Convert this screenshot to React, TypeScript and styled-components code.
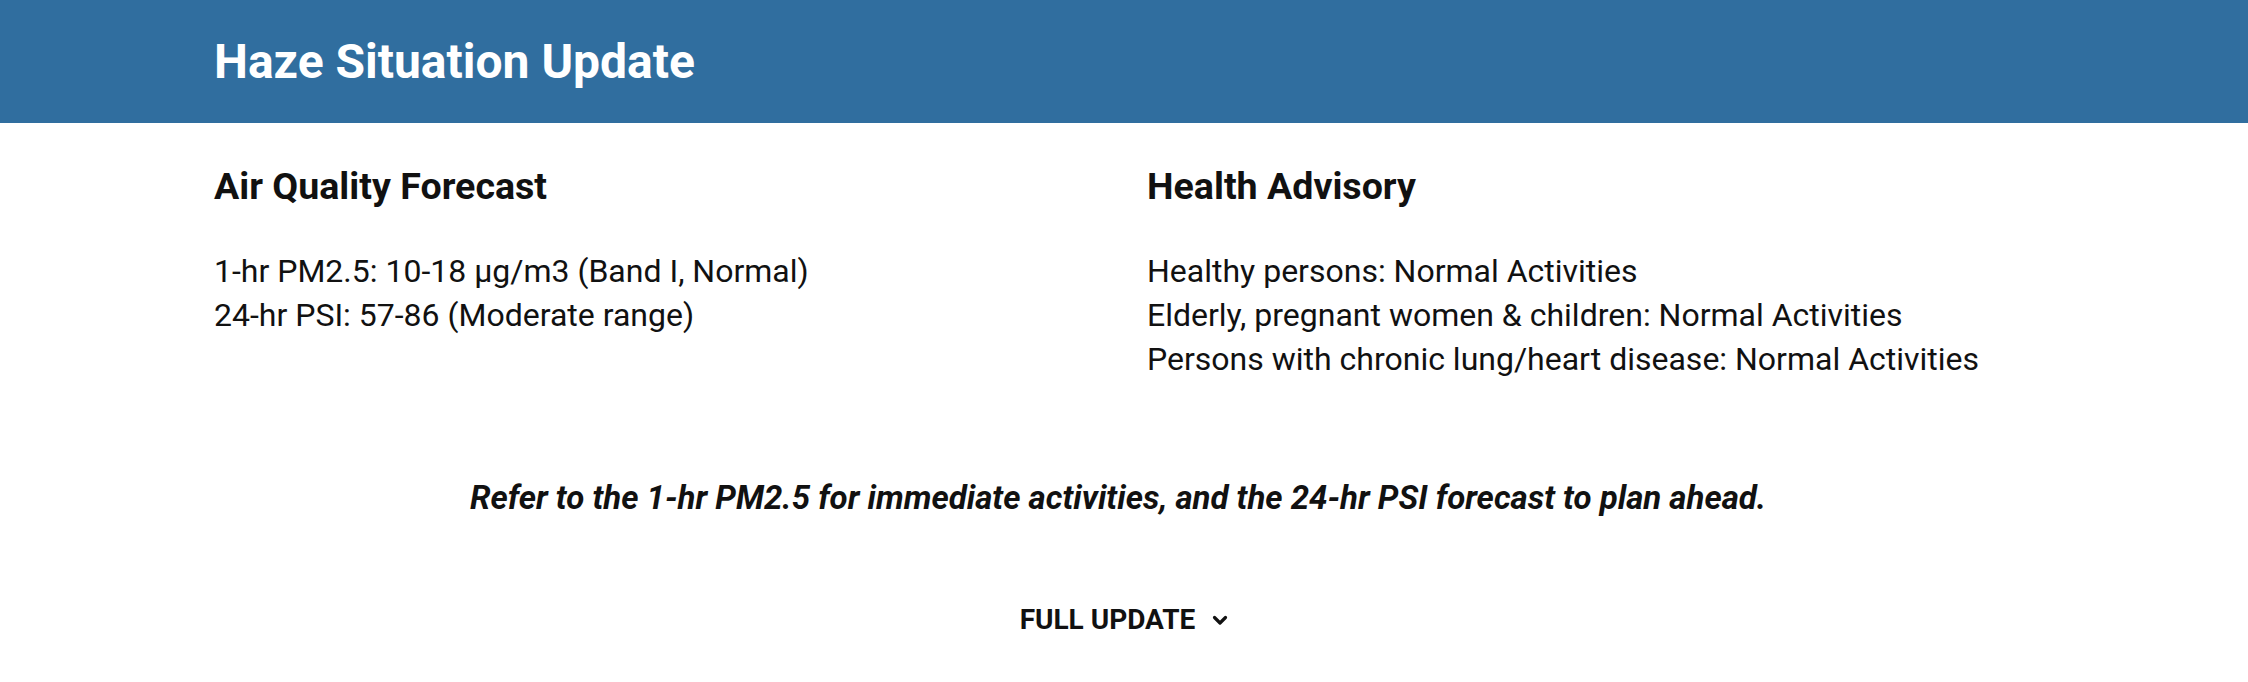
import styled, { createGlobalStyle } from "styled-components";

const GlobalStyle = createGlobalStyle`
  body {
    margin: 0;
    background: #ffffff;
    font-family: Roboto, "Liberation Sans", Arial, sans-serif;
    color: #111111;
  }
`;

const Banner = styled.header`
  background-color: #306e9f;
  height: 123px;
  display: flex;
  align-items: center;
`;

const Container = styled.div`
  width: 1820px;
  margin: 0 auto;
`;

const Title = styled.h1`
  margin: 0;
  color: #ffffff;
  font-size: 48px;
  font-weight: 700;
  line-height: 1.2;
`;

const Columns = styled.div`
  display: grid;
  grid-template-columns: 887px 887px;
  column-gap: 46px;
  padding-top: 41px;
`;

const Heading = styled.h2`
  margin: 0 0 41px;
  font-size: 37.6px;
  font-weight: 700;
  line-height: 44px;
`;

const Line = styled.p`
  margin: 0;
  font-size: 32px;
  line-height: 44px;
`;

const Note = styled.p`
  margin: 97px 0 0;
  padding-right: 12px;
  text-align: center;
  font-size: 33px;
  font-weight: 700;
  font-style: italic;
  line-height: 40px;
`;

const Toggle = styled.button`
  display: flex;
  align-items: center;
  gap: 17px;
  margin: 85px auto 0;
  padding: 0;
  border: none;
  background: none;
  font-family: inherit;
  font-size: 28px;
  font-weight: 700;
  line-height: 34px;
  text-transform: uppercase;
  color: #111111;
  cursor: pointer;
`;

const Chevron = () => (
  <svg width="16" height="11" viewBox="0 0 16 11" fill="none">
    <polyline points="2.5,2.5 8,8 13.5,2.5" stroke="#111" strokeWidth="3.2" strokeLinecap="round" strokeLinejoin="round" />
  </svg>
);

const forecast = ["1-hr PM2.5: 10-18 µg/m3 (Band I, Normal)", "24-hr PSI: 57-86 (Moderate range)"];

const advisory = [
  "Healthy persons: Normal Activities",
  "Elderly, pregnant women & children: Normal Activities",
  "Persons with chronic lung/heart disease: Normal Activities",
];

export default function App() {
  return (
    <>
      <GlobalStyle />
      <Banner>
        <Container>
          <Title>Haze Situation Update</Title>
        </Container>
      </Banner>
      <Container>
        <Columns>
          <section>
            <Heading>Air Quality Forecast</Heading>
            {forecast.map((t) => (
              <Line key={t}>{t}</Line>
            ))}
          </section>
          <section>
            <Heading>Health Advisory</Heading>
            {advisory.map((t) => (
              <Line key={t}>{t}</Line>
            ))}
          </section>
        </Columns>
        <Note>Refer to the 1-hr PM2.5 for immediate activities, and the 24-hr PSI forecast to plan ahead.</Note>
        <Toggle>
          Full Update
          <Chevron />
        </Toggle>
      </Container>
    </>
  );
}
